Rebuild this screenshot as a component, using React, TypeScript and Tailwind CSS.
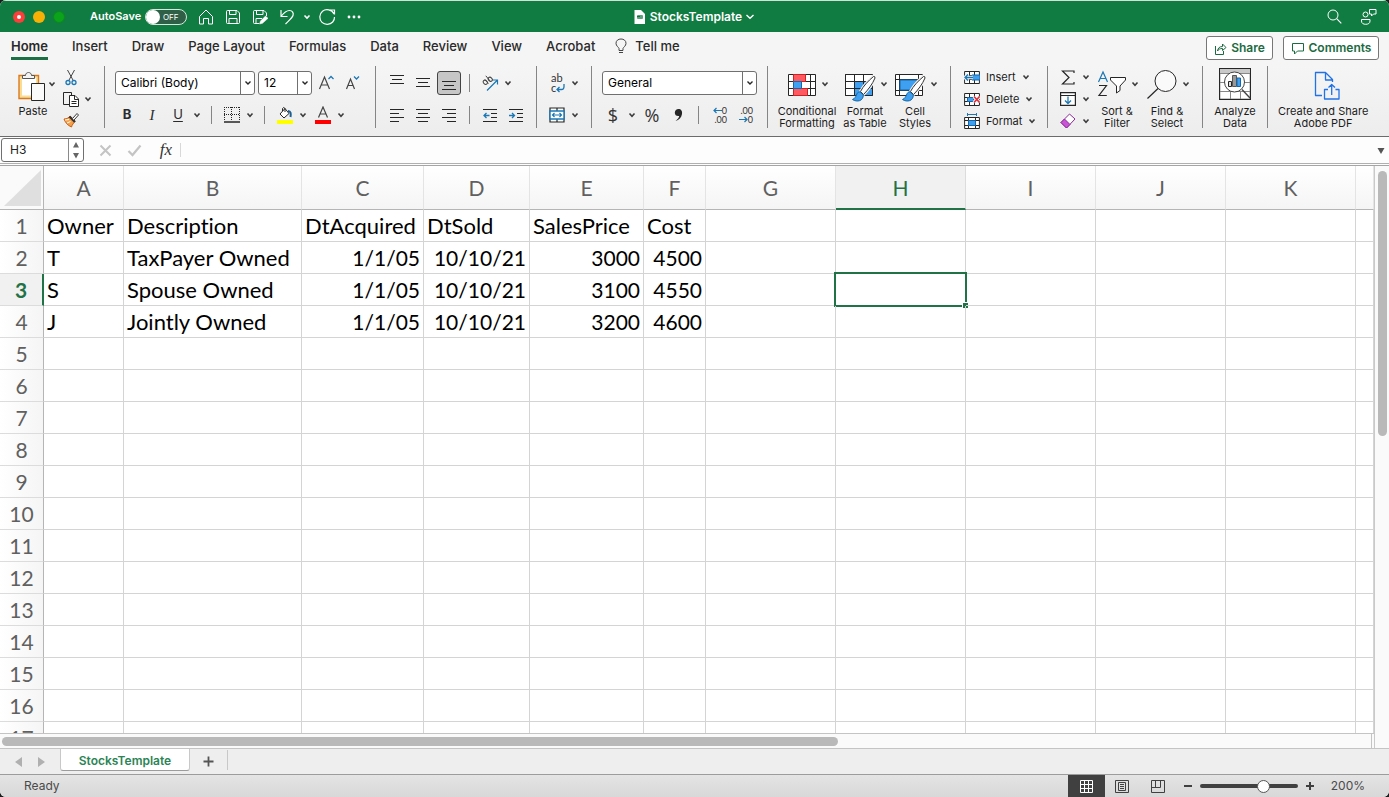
import React from "react";

type Kids = { children?: React.ReactNode };

function Icon({ w, h, children, className = "" }: Kids & { w: number; h: number; className?: string }) {
  return (
    <svg width={w} height={h} viewBox={`0 0 ${w} ${h}`} fill="none" stroke="#262626" aria-hidden="true" className={`shrink-0 ${className}`}>
      {children}
    </svg>
  );
}

function Chevron({ label, className = "" }: { label: string; className?: string }) {
  return (
    <button aria-label={label} className={`flex h-6 w-3 shrink-0 items-center justify-center ${className}`}>
      <Icon w={8} h={6}>
        <path d="M1.5 1.5 L4 4.2 L6.5 1.5" strokeWidth="1.6" stroke="#3c3c3c" />
      </Icon>
    </button>
  );
}

function Tool({ label, className = "w-4", children }: Kids & { label: string; className?: string }) {
  return (
    <button aria-label={label} className={`flex h-6 shrink-0 items-center justify-center ${className}`}>
      {children}
    </button>
  );
}

function Divider() {
  return <div className="h-[62px] w-px shrink-0 bg-[#858585]" />;
}

function MiniDivider({ className = "" }: { className?: string }) {
  return <div className={`h-[18px] w-px shrink-0 bg-[#858585] ${className}`} />;
}

function Picker({ label, value, className }: { label: string; value: string; className: string }) {
  return (
    <div className={`relative h-6 shrink-0 ${className}`}>
      <select aria-label={label} className="block h-6 w-full appearance-none rounded-[3px] border border-[#707070] bg-white pl-[5px] text-[12px] text-black outline-none">
        <option>{value}</option>
      </select>
      <span className="pointer-events-none absolute inset-y-0 right-0 flex w-[15px] items-center justify-center border-l border-[#707070]">
        <Icon w={8} h={6}>
          <path d="M1.5 1.5 L4 4 L6.5 1.5" strokeWidth="1.4" />
        </Icon>
      </span>
    </div>
  );
}

function Lines({ spans }: { spans: [number, number][] }) {
  return (
    <Icon w={14} h={14}>
      {spans.map(([a, b], i) => (
        <path key={i} d={`M${a} ${i * 4 + 1.5} H${b}`} />
      ))}
    </Icon>
  );
}

function BigButton({ lines, icon, menu, className = "" }: { lines: [string, string]; icon: React.ReactNode; menu?: boolean; className?: string }) {
  return (
    <button className={`flex shrink-0 flex-col items-center ${className}`}>
      <span className="flex h-9 items-center">
        {menu && <span className="w-0.5" />}
        {icon}
        {menu && (
          <span className="flex w-3 justify-end">
            <Icon w={8} h={6}>
              <path d="M1.5 1.5 L4 4.2 L6.5 1.5" strokeWidth="1.6" stroke="#3c3c3c" />
            </Icon>
          </span>
        )}
      </span>
      <span className="mt-[3px] text-[11px] leading-[12px] whitespace-nowrap text-[#1c1c1c]">
        {lines[0]}
        <br />
        {lines[1]}
      </span>
    </button>
  );
}

function Brush() {
  return (
    <>
      <path d="M29 2.500 C24 7 19 12.500 16.500 17.500 L19.500 20.500 C24 16 28.500 10 31 4 Z" fill="#f4f4f4" stroke="#f2f2f2" strokeWidth="3" />
      <path d="M29.500 2.500 C24 7 19 12.500 16.500 17.500 L19.500 20.500 C24 16 28.500 10 31 4 Q31 2 29.500 2.500 Z" fill="#fff" stroke="#333" />
      <path d="M16 17.800 C12 17.500 13 24 8.500 25.500 C13 28.500 19.500 27 19.300 21 Z" fill="#3f9ff0" stroke="#1567a8" />
    </>
  );
}

function TitleBar() {
  return (
    <header className="flex h-8 shrink-0 items-center border-t border-[#cfe3d6] bg-[#107c41] text-white">
      <div className="flex flex-1 items-center">
        <div className="ml-[13px] flex gap-2">
          <button aria-label="Close window" className="flex size-3 items-center justify-center rounded-full bg-[#fc3d39]">
            <span className="size-1 rounded-full bg-white" />
          </button>
          <button aria-label="Minimize window" className="size-3 rounded-full bg-[#f8b006]" />
          <button aria-label="Zoom window" className="size-3 rounded-full border border-[#0b8a1c] bg-[#0aa31a]" />
        </div>
        <span className="ml-[25px] w-[51px] text-[11px] font-semibold whitespace-nowrap">AutoSave</span>
        <button role="switch" aria-checked="false" aria-label="AutoSave" className="ml-1 flex h-4 w-[42px] items-center rounded-full border border-[#d7e8de] bg-[#2f5f46] text-[8px]">
          <span className="size-3.5 rounded-full bg-white" />
          <span className="ml-[3px]">OFF</span>
        </button>
        <div className="ml-[11px] flex items-center gap-[11px]">
          <button aria-label="Home">
            <Icon w={16} h={16}>
              <path stroke="#fff" d="M1.5 7.500 L8 1 L14.500 7.500 V15 H10.500 V9.500 H5.500 V15 H1.500 Z" strokeLinejoin="round" />
            </Icon>
          </button>
          <button aria-label="Save">
            <Icon w={16} h={16}>
              <path stroke="#fff" d="M1.500 2.500 Q1.500 1.500 2.500 1.500 H12 L14.500 4 V13.500 Q14.500 14.500 13.500 14.500 H2.500 Q1.500 14.500 1.500 13.500 Z M4.500 1.500 V5.500 H11 V1.500 M4 14.500 V9.500 H12 V14.500" />
            </Icon>
          </button>
          <button aria-label="Save as">
            <Icon w={16} h={16}>
              <path stroke="#fff" d="M7 14.500 H2.500 Q1.500 14.500 1.500 13.500 V2.500 Q1.500 1.500 2.500 1.500 H12 L14.500 4 V7 M4.500 1.500 V5.500 H11 V1.500 M4 14.500 V9.500 H10" />
              <path d="M7.500 15 L8.500 12 L13.500 7 L16 9.300 L10.500 14.300 Z" fill="#fff" stroke="#fff" strokeWidth=".5" />
            </Icon>
          </button>
          <button aria-label="Undo">
            <Icon w={16} h={16}>
              <path stroke="#fff" strokeWidth="1.2" d="M2 1 V7.500 H8.500 M2 7.500 C5 3.500 8 1.500 10.500 1.500 C13.500 1.500 14.800 4 14 6.500 C13.500 8.500 11 10.500 6.500 15" />
            </Icon>
          </button>
        </div>
        <button aria-label="Undo history" className="ml-2">
          <Icon w={8} h={6}>
            <path d="M1.500 1.500 L4 4 L6.500 1.500" stroke="#fff" strokeWidth="1.600" />
          </Icon>
        </button>
        <button aria-label="Repeat" className="ml-[7px]">
          <Icon w={18} h={18}>
            <path stroke="#fff" strokeWidth="1.200" d="M12 2 H16.500 V6.500 M16 6 C14 1.500 8 .5 4.500 3.200 C1 6 1 11.500 4 14.400 C7 17.200 12 17 14.700 14 C16.200 12.300 16.600 10.500 16.500 9" />
          </Icon>
        </button>
        <button aria-label="More commands" className="ml-2.5">
          <Icon w={16} h={4}>
            <circle cx="3" cy="2" r="1.400" fill="#fff" stroke="none" />
            <circle cx="8" cy="2" r="1.400" fill="#fff" stroke="none" />
            <circle cx="13" cy="2" r="1.400" fill="#fff" stroke="none" />
          </Icon>
        </button>
      </div>
      <button className="flex items-center text-[12px] font-semibold">
        <Icon w={11} h={14} className="mr-[5px]">
          <path d="M.5 0 H7 L11 4 V14 H.5 Z" fill="#fff" stroke="none" />
          <rect x="3" y="5" width="6" height="4" rx="1" fill="#5aa27c" stroke="none" />
          <path d="M3 6.500 H6" stroke="#1d6b41" />
        </Icon>
        StocksTemplate
        <Icon w={10} h={6} className="ml-[3px]">
          <path d="M1.500 1 L5 4.300 L8.500 1" stroke="#fff" strokeWidth="1.400" />
        </Icon>
      </button>
      <div className="flex flex-1 items-center justify-end gap-[18px]">
        <button aria-label="Search">
          <Icon w={15} h={15}>
            <circle cx="6" cy="6" r="5" stroke="#fff" />
            <path d="M9.700 9.700 L14.300 14.300" stroke="#fff" strokeWidth="1.200" />
          </Icon>
        </button>
        <button aria-label="Presence" className="mr-3">
          <Icon w={17} h={17}>
            <g stroke="#fff">
              <circle cx="5.500" cy="6.500" r="2.500" />
              <path d="M1.500 11.500 H10 V13 C10 15.500 8 16.300 5.700 16.300 C3.500 16.300 1.500 15.500 1.500 13 Z" strokeLinejoin="round" />
              <path d="M9.500 1.500 H16 V6 H13.500 L11.500 8 V6 H9.500 Z" strokeLinejoin="round" />
            </g>
          </Icon>
        </button>
      </div>
    </header>
  );
}

const tabs = ["Home", "Insert", "Draw", "Page Layout", "Formulas", "Data", "Review", "View", "Acrobat"];

function TabRow() {
  return (
    <nav className="flex h-[34px] shrink-0 items-start bg-[#f5f5f5] pr-[10px] pl-[11px] text-[13px] font-medium text-[#2a2a2a]">
      <div className="flex gap-6">
        {tabs.map((t, i) => (
          <a key={t} href="#" className={i === 0 ? "border-b-[3px] border-[#1c6f44] pt-1 pb-px leading-5 font-semibold" : "pt-1 leading-5"}>
            {t}
          </a>
        ))}
      </div>
      <button className="ml-5 flex items-center gap-2 pt-1 leading-5">
        <Icon w={12} h={16}>
          <path d="M4 12 V10.500 C3.500 9 1 8 1 5.300 C1 2.500 3.300 1 6 1 C8.700 1 11 2.500 11 5.300 C11 8 8.500 9 8 10.500 V12 M3.800 12.500 H8.200 M4 14.500 H8" stroke="#444" />
        </Icon>
        Tell me
      </button>
      <div className="ml-auto flex gap-2.5 pt-1 text-[12px] font-semibold text-[#1b6b41]">
        <button className="flex h-6 w-[67px] items-center justify-center gap-1 rounded-[3px] border border-[#777] bg-white">
          <Icon w={13} h={13}>
            <path stroke="#1b6b41" d="M1.500 4 V12.500 H9.500 V9 M3.500 9 C4 6 5.500 4.500 8.500 4.500 V2 L12 5.500 L8.500 8.500 V6.500 C6 6.500 4.500 7.200 3.500 9 Z" strokeLinejoin="round" />
          </Icon>
          Share
        </button>
        <button className="flex h-6 w-24 items-center justify-center gap-1 rounded-[3px] border border-[#777] bg-white">
          <Icon w={14} h={13}>
            <path stroke="#1b6b41" d="M1.500 1.500 H12.500 V9 H6.500 L3.500 12 V9 H1.500 Z" strokeLinejoin="round" />
          </Icon>
          Comments
        </button>
      </div>
    </nav>
  );
}

function ClipboardGroup() {
  return (
    <div className="flex w-[104px] shrink-0">
      <button className="ml-3.5 flex w-[38px] shrink-0 flex-col items-center">
        <Icon w={29} h={32} className="mt-1 mr-1">
          <path d="M2 5.500 H21.500 V28.500 H2 Z" fill="#fbdc93" stroke="#d9791f" strokeWidth="1.400" />
          <path d="M5 8 H19 V25.500 H5 Z" fill="#fff" stroke="none" />
          <path d="M5.500 8.500 V5.500 H8.500 C8.500 1.500 14.500 1.500 14.500 5.500 H17.500 V8.500 Z" fill="#f4f4f4" stroke="#555" />
          <path d="M14.500 13.500 H27.500 V30.500 H14.500 Z" fill="#fafafa" />
        </Icon>
        <span className="mt-0.5 text-[11px] leading-[14px] text-[#1c1c1c]">Paste</span>
      </button>
      <Chevron label="Paste options" className="mt-1.5 -ml-1.5" />
      <div className="ml-[5px] flex flex-col gap-1 pt-1">
        <Tool label="Cut" className="h-4! w-4">
          <Icon w={16} h={16}>
            <path d="M4.500 0 L10.500 11 M11.500 0 L5.500 11" stroke="#444" />
            <circle cx="5" cy="12.500" r="2" stroke="#1b78b5" strokeWidth="1.300" />
            <circle cx="11" cy="12.500" r="2" stroke="#1b78b5" strokeWidth="1.300" />
          </Icon>
        </Tool>
        <div className="flex h-[18px] items-center">
          <Tool label="Copy">
            <Icon w={17} h={17}>
              <path d="M7 13.500 H.5 V1.500 H8.500 V4" />
              <path d="M6.500 4.500 H12 L15.500 8 V15.500 H6.500 Z" fill="#fff" />
              <path d="M11.500 4.500 V8.500 H15.500 M8.500 10.500 H13.500 M8.500 12.500 H13.500" />
            </Icon>
          </Tool>
          <Chevron label="Copy options" className="ml-[3px]" />
        </div>
        <Tool label="Format painter" className="h-4! w-4">
          <Icon w={17} h={16}>
            <path d="M1 7 C4 7 6 5.500 7 4 L12 9.500 C10.500 11 9 13 8.500 15 C5 13.500 2.500 11 1 7 Z" fill="#f5a04a" stroke="#c95f10" />
            <path d="M6.500 4.500 L12 10" stroke="#333" strokeWidth="2.200" />
            <path d="M9.500 6.500 L14 1.500 L15.500 3 L11 8" fill="#fff" stroke="#333" />
            <path d="M2 8 L6 7.500 M4 11 L7.500 9.500" stroke="#fff" />
          </Icon>
        </Tool>
      </div>
    </div>
  );
}

function FontGroup() {
  return (
    <div className="w-[270px] shrink-0 pt-px pl-2.5">
      <div className="flex h-8 items-center">
        <Picker label="Font" value="Calibri (Body)" className="w-[140px]" />
        <Picker label="Font size" value="12" className="ml-[3px] w-[54px]" />
        <Tool label="Increase font size" className="ml-1.5 w-[18px]">
          <Icon w={18} h={18}>
            <path d="M1.500 15 L6.500 3 L11.500 15 M3.300 11 H9.700" stroke="#444" strokeWidth="1.200" />
            <path d="M10.500 5 L13 2.500 L15.500 5" stroke="#1b78b5" strokeWidth="1.300" />
          </Icon>
        </Tool>
        <Tool label="Decrease font size" className="ml-2 w-[18px]">
          <Icon w={18} h={18}>
            <path d="M2.500 15 L6.500 5 L10.500 15 M4 11.500 H9" stroke="#444" strokeWidth="1.200" />
            <path d="M10 2.500 L12.500 5 L15 2.500" stroke="#1b78b5" strokeWidth="1.300" />
          </Icon>
        </Tool>
      </div>
      <div className="flex h-8 items-center text-[13px] text-[#2b2b2b]">
        <button className="w-6 font-bold" aria-label="Bold">B</button>
        <button className="w-[26px] font-['Liberation_Serif',serif] text-[15px] leading-5 italic" aria-label="Italic">I</button>
        <button className="w-[26px] underline underline-offset-2" aria-label="Underline">U</button>
        <Chevron label="Underline style" />
        <MiniDivider className="ml-2" />
        <Tool label="Borders" className="ml-3 w-4">
          <Icon w={16} h={16}>
            <path d="M0 .5 H16 M.5 0 V14 M15.500 0 V14 M7.500 0 V14 M0 7.500 H16" strokeDasharray="1 1" />
            <path d="M0 15 H16" strokeWidth="1.500" />
          </Icon>
        </Tool>
        <Chevron label="Border options" className="ml-1" />
        <MiniDivider className="ml-2" />
        <Tool label="Fill color" className="ml-3 w-4">
          <Icon w={16} h={18}>
            <path d="M3 8 L8 2.500 L12 7.500 L7 12 Z" fill="#fff" />
            <path d="M5.500 5 V2.500 Q6.500 .5 8 2.500 V6" />
            <path d="M11 5 C14 5 14 8 13.500 11" stroke="#1b5f93" strokeWidth="2" />
            <path d="M0 16 H16" stroke="#ffff00" strokeWidth="4" />
          </Icon>
        </Tool>
        <Chevron label="Fill color options" className="ml-1" />
        <Tool label="Font color" className="ml-1.5 w-4">
          <Icon w={16} h={18}>
            <path d="M3.500 11.500 L8 1 L12.500 11.500 M5 8 H11" stroke="#444" strokeWidth="1.200" />
            <path d="M0 16 H16" stroke="#ff0000" strokeWidth="4" />
          </Icon>
        </Tool>
        <Chevron label="Font color options" className="ml-1" />
      </div>
    </div>
  );
}

function AlignGroup() {
  return (
    <div className="w-[160px] shrink-0 pt-px pl-[9px]">
      <div className="flex h-8 items-center">
        <Tool label="Top align" className="w-6 pb-1"><Lines spans={[[0, 14], [2, 12], [0, 14]]} /></Tool>
        <Tool label="Middle align" className="ml-0.5 w-6 pt-0.5"><Lines spans={[[0, 14], [2, 12], [0, 14]]} /></Tool>
        <Tool label="Bottom align" className="ml-0.5 w-6 rounded-[3px] border border-[#444] bg-[#c6c6c6] pt-2"><Lines spans={[[0, 14], [2, 12], [0, 14]]} /></Tool>
        <MiniDivider className="ml-2" />
        <Tool label="Orientation" className="ml-3 w-4">
          <Icon w={17} h={17}>
            <g stroke="#444">
              <ellipse cx="3.300" cy="7.300" rx="1.800" ry="2.300" transform="rotate(-45 3.300 7.300)" />
              <path d="M3 4.500 L6.500 8.500" />
              <ellipse cx="8.300" cy="4.300" rx="1.800" ry="2.300" transform="rotate(-45 8.300 4.300)" />
              <path d="M3.800 .8 L8.500 6.500" />
            </g>
            <path d="M5 15.500 L15.500 5 M11 5 H15.500 V9.500" stroke="#1b78b5" strokeWidth="1.200" />
          </Icon>
        </Tool>
        <Chevron label="Orientation options" className="ml-1" />
      </div>
      <div className="flex h-8 items-center">
        <Tool label="Align left" className="w-6"><Lines spans={[[0, 14], [0, 9], [0, 14], [0, 9]]} /></Tool>
        <Tool label="Center" className="ml-0.5 w-6"><Lines spans={[[0, 14], [2, 12], [0, 14], [2, 12]]} /></Tool>
        <Tool label="Align right" className="ml-0.5 w-6"><Lines spans={[[0, 14], [5, 14], [0, 14], [5, 14]]} /></Tool>
        <MiniDivider className="ml-2" />
        <Tool label="Decrease indent" className="ml-3 w-4">
          <Icon w={14} h={14}>
            <path d="M0 1.500 H14 M8 5.500 H14 M8 9.500 H14 M0 13.500 H14" />
            <path d="M6.500 7.500 H1 M3.500 5 L1 7.500 L3.500 10" stroke="#1b78b5" strokeWidth="1.300" />
          </Icon>
        </Tool>
        <Tool label="Increase indent" className="ml-2.5 w-4">
          <Icon w={14} h={14}>
            <path d="M0 1.500 H14 M8 5.500 H14 M8 9.500 H14 M0 13.500 H14" />
            <path d="M0 7.500 H5.500 M3 5 L5.500 7.500 L3 10" stroke="#1b78b5" strokeWidth="1.300" />
          </Icon>
        </Tool>
      </div>
    </div>
  );
}

function WrapGroup() {
  return (
    <div className="w-[54px] shrink-0 pt-px pl-3">
      <div className="flex h-8 items-center">
        <Tool label="Wrap text">
          <span className="flex w-4 flex-col pl-0.5 text-left font-['Lato',sans-serif] text-[11px] leading-[10px] text-[#333]">
            <span className="h-2.5">ab</span>
            <span className="flex h-2.5 items-center">
              c
              <Icon w={9} h={9}>
                <path d="M8 0 V2.500 Q8 5.500 5.500 5.500 H1 M3.500 3 L1 5.500 L3.500 8" stroke="#1b78b5" strokeWidth="1.300" />
              </Icon>
            </span>
          </span>
        </Tool>
        <Chevron label="Wrap options" className="ml-1" />
      </div>
      <div className="flex h-8 items-center">
        <Tool label="Merge cells">
          <Icon w={16} h={16}>
            <path d="M1 1 H15 V15 H1 Z M8 1 V4 M8 12 V15" fill="#fff" strokeWidth="1.200" />
            <path d="M1 4 H15 V12 H1 Z" stroke="#1b78b5" strokeWidth="1.400" fill="#fff" />
            <path d="M3.500 8 H12.500 M5.500 6 L3.500 8 L5.500 10 M10.500 6 L12.500 8 L10.500 10" stroke="#1b78b5" strokeWidth="1.200" />
          </Icon>
        </Tool>
        <Chevron label="Merge options" className="ml-1" />
      </div>
    </div>
  );
}

function NumberGroup() {
  return (
    <div className="w-[175px] shrink-0 pt-px pl-2.5">
      <div className="flex h-8 items-center">
        <Picker label="Number format" value="General" className="w-[155px]" />
      </div>
      <div className="flex h-8 items-center text-[#333]">
        <button aria-label="Currency" className="w-[22px] font-['Open_Sans',sans-serif] text-[18px] leading-6">$</button>
        <Chevron label="Currency options" className="ml-0.5" />
        <button aria-label="Percent" className="ml-1 w-5 font-['Open_Sans',sans-serif] text-[18px] leading-6">%</button>
        <Tool label="Comma style" className="ml-1.5 w-5">
          <Icon w={9} h={14}>
            <path d="M4.500 1 C7 1 8.500 3 8 6 C7.500 9.500 5 12 1.500 13 C4 11 5.200 9.300 5.200 8 C2.500 8.500 .8 6.800 .8 4.700 C.8 2.500 2.500 1 4.500 1 Z" fill="#262626" stroke="none" />
          </Icon>
        </Tool>
        <MiniDivider className="ml-2.5" />
        <Tool label="Increase decimal" className="ml-3 w-4">
          <span className="flex w-4 flex-col items-end font-['Lato',sans-serif] text-[9px] leading-[9px]">
            <span className="flex h-[9px] items-center">
              <Icon w={9} h={7}>
                <path d="M9 3.500 H1 M3.500 1 L1 3.500 L3.500 6" stroke="#1b78b5" strokeWidth="1.200" />
              </Icon>
              0
            </span>
            <span className="h-[9px]">.00</span>
          </span>
        </Tool>
        <Tool label="Decrease decimal" className="ml-2.5 w-4">
          <span className="flex w-4 flex-col items-end font-['Lato',sans-serif] text-[9px] leading-[9px]">
            <span className="h-[9px]">.00</span>
            <span className="flex h-[9px] items-center">
              <Icon w={9} h={7}>
                <path d="M0 3.500 H8 M5.500 1 L8 3.500 L5.500 6" stroke="#1b78b5" strokeWidth="1.200" />
              </Icon>
              0
            </span>
          </span>
        </Tool>
      </div>
    </div>
  );
}

function StylesGroup() {
  return (
    <div className="flex w-[182px] shrink-0 pl-2.5">
      <BigButton
        menu
        className="w-[58px]"
        lines={["Conditional", "Formatting"]}
        icon={
          <Icon w={30} h={36}>
            <path d="M1.500 8.500 H28.500 V29.500 H1.500 Z" fill="#fff" />
            <path d="M1.500 15.500 H28.500 M1.500 22.500 H28.500 M23.500 8.500 V29.500 M6.500 8.500 V29.500" />
            <path d="M6.500 8.500 H18.500 V15.500 H6.500 Z M6.500 22.500 H20.500 V29.500 H6.500 Z" fill="#ff5a61" stroke="#c22" />
            <path d="M6.500 15.500 H14.500 V22.500 H6.500 Z" fill="#3f9ff0" stroke="#1567a8" />
          </Icon>
        }
      />
      <BigButton
        menu
        className="w-[58px]"
        lines={["Format", "as Table"]}
        icon={
          <Icon w={32} h={36}>
            <path d="M1.500 8.500 H28.500 V29.500 H1.500 Z" fill="#fff" />
            <path d="M10.500 15.500 H28.500 V29.500 H10.500 Z" fill="#3f9ff0" stroke="none" />
            <path d="M1.500 8.500 H28.500 V29.500 H1.500 Z M1.500 15.500 H28.500 M1.500 22.500 H28.500 M10.500 8.500 V29.500 M19.500 8.500 V29.500" />
            <g transform="translate(0 8)"><Brush /></g>
          </Icon>
        }
      />
      <BigButton
        menu
        className="w-[42px]"
        lines={["Cell", "Styles"]}
        icon={
          <Icon w={32} h={36}>
            <path d="M1.500 8.500 H28.500 V29.500 H1.500 Z" fill="#fff" />
            <path d="M5.500 8.500 V29.500 M24.500 8.500 V29.500 M1.500 13.500 H28.500 M1.500 24.500 H28.500" />
            <path d="M6 14 H24 V24 H6 Z" fill="#3f9ff0" stroke="#1567a8" />
            <g transform="translate(0 8)"><Brush /></g>
          </Icon>
        }
      />
    </div>
  );
}

function CellsGroup() {
  const grid = <path d="M.6 2.500 H15.400 V14.500 H.6 Z M.6 6.500 H15.400 M.6 10.500 H15.400 M5.500 2.500 V14.500 M10.500 2.500 V14.500" fill="#fff" />;
  const items = [
    {
      name: "Insert",
      art: (
        <>
          {grid}
          <path d="M8 6 H16 V11 H8 Z" fill="#3f9ff0" stroke="#1567a8" />
          <path d="M9 8.500 H1 M4 5.500 L1 8.500 L4 11.500" stroke="#f3f3f3" strokeWidth="3.500" />
          <path d="M9 8.500 H1 M4 5.500 L1 8.500 L4 11.500" stroke="#1b78b5" strokeWidth="1.300" />
        </>
      ),
    },
    {
      name: "Delete",
      art: (
        <>
          {grid}
          <path d="M3.500 6.500 H9.500 V10.500 H3.500 Z" fill="#3f9ff0" stroke="#1567a8" />
          <path d="M10 5.500 L15.500 11.500 M15.500 5.500 L10 11.500" stroke="#fff" strokeWidth="3.500" />
          <path d="M10 5.500 L15.500 11.500 M15.500 5.500 L10 11.500" stroke="#e0303a" strokeWidth="1.600" />
        </>
      ),
    },
    {
      name: "Format",
      art: (
        <>
          <path d="M.6 4.500 H15.400 V15.500 H.6 Z M.6 7.500 H15.400 M.6 12.500 H15.400 M4.500 4.500 V15.500 M11.500 4.500 V15.500" fill="#fff" />
          <path d="M4.500 7.500 H11.500 V12.500 H4.500 Z" fill="#3f9ff0" stroke="#1567a8" />
          <path d="M3.500 1.500 H12.500 M3.500 0 V3 M12.500 0 V3" stroke="#1b78b5" />
        </>
      ),
    },
  ];
  return (
    <div className="w-24 shrink-0 pl-[13px]">
      {items.map((it) => (
        <button key={it.name} className="flex h-[22px] items-center text-[11px] text-[#1c1c1c]">
          <Icon w={16} h={16} className="mr-1.5">{it.art}</Icon>
          {it.name}
          <Icon w={8} h={6} className="ml-1.5">
            <path d="M1.500 1.500 L4 4.200 L6.500 1.500" strokeWidth="1.600" stroke="#3c3c3c" />
          </Icon>
        </button>
      ))}
    </div>
  );
}

function EditingGroup() {
  return (
    <div className="flex w-[154px] shrink-0 pl-3">
      <div>
        <div className="flex h-[22px] items-center">
          <Tool label="AutoSum"><Icon w={14} h={15}><path d="M13 3 V1 H1.500 L8 7.500 L1.500 14 H13 V12" strokeWidth="1.200" /></Icon></Tool>
          <Chevron label="AutoSum options" className="ml-1" />
        </div>
        <div className="flex h-[22px] items-center">
          <Tool label="Fill">
            <Icon w={16} h={14}>
              <path d="M.6 .6 H15.400 V13.400 H.6 Z M.6 3.500 H15.400" fill="#fff" strokeWidth="1.200" />
              <path d="M8 4.500 V11.500 M5 8.500 L8 11.500 L11 8.500" stroke="#1b78b5" strokeWidth="1.300" />
            </Icon>
          </Tool>
          <Chevron label="Fill options" className="ml-1" />
        </div>
        <div className="flex h-[22px] items-center">
          <Tool label="Clear">
            <Icon w={16} h={16}>
              <path d="M1 9.500 L9.500 1 L15 6 L6.500 15 Z" fill="#fff" stroke="#8a2a96" strokeLinejoin="round" />
              <path d="M1 9.500 L4.500 6 L10 11.500 L6.500 15 Z" fill="#c955d6" stroke="#8a2a96" strokeLinejoin="round" />
            </Icon>
          </Tool>
          <Chevron label="Clear options" className="ml-1" />
        </div>
      </div>
      <BigButton
        menu
        className="w-[50px]"
        lines={["Sort &", "Filter"]}
        icon={
          <Icon w={30} h={32}>
            <path d="M1.500 14 L6 4 L10.500 14 M3 10.500 H9" stroke="#1b78b5" strokeWidth="1.200" />
            <path d="M2 17.500 H9.500 L2 27.500 H9.800" strokeWidth="1.200" />
            <path d="M13.500 9.500 H28.500 V12 L23 18 V22.500 L19.500 25 V18 L13.500 12 Z" fill="#fff" />
          </Icon>
        }
      />
      <BigButton
        menu
        className="w-[50px]"
        lines={["Find &", "Select"]}
        icon={
          <Icon w={32} h={32}>
            <circle cx="19.500" cy="13" r="10.500" fill="#fafafa" />
            <path d="M12 20.500 L1.500 30.500" strokeWidth="1.200" />
          </Icon>
        }
      />
    </div>
  );
}

function Ribbon() {
  return (
    <div className="flex h-[71px] shrink-0 items-start overflow-hidden border-b border-[#6b6b6b] bg-linear-to-b from-[#f5f5f5] to-[#ededed]">
      <ClipboardGroup />
      <Divider />
      <FontGroup />
      <Divider />
      <AlignGroup />
      <Divider />
      <WrapGroup />
      <Divider />
      <NumberGroup />
      <Divider />
      <StylesGroup />
      <Divider />
      <CellsGroup />
      <Divider />
      <EditingGroup />
      <Divider />
      <div className="flex w-16 shrink-0 justify-center">
        <BigButton
          lines={["Analyze", "Data"]}
          icon={
            <Icon w={32} h={34}>
              <path d="M.6 1.600 H31.400 V32.400 H.6 Z" fill="#fff" strokeWidth="1.200" />
              <path d="M1 2 H31 V6 H1 Z" fill="#c8c8c8" stroke="none" />
              <path d="M1 6.500 H31 M1 15.500 H31 M1 24.500 H31 M11.500 24 V32 M21.500 24 V32" stroke="#888" />
              <circle cx="15.500" cy="15" r="10" fill="#fff" stroke="#444" />
              <path d="M9.500 14.500 H12.500 V19.500 H9.500 Z" fill="#ddd" />
              <path d="M13.500 8.500 H17.500 V19.500 H13.500 Z" fill="#999" stroke="#555" />
              <path d="M18 11 H21.500 V19.500 H18 Z" fill="#3f9ff0" stroke="#1567a8" />
              <path d="M23 22.500 L31 31" stroke="#444" strokeWidth="1.400" />
            </Icon>
          }
        />
      </div>
      <Divider />
      <div className="flex shrink-0 pl-2.5">
        <BigButton
          lines={["Create and Share", "Adobe PDF"]}
          icon={
            <Icon w={26} h={30} className="mt-1 ml-2">
              <g stroke="#1f72e8" strokeWidth="1.300" strokeLinejoin="round">
                <path d="M8 24.500 H1.500 V1.500 H11.500 L18.500 8.500 V11 M11.500 1.500 V9 H18.500" />
                <path d="M14 18.500 H10.500 V28 H25 V18.500 H21.500 M17.700 24 V13.500 M14.500 16.500 L17.700 13.500 L21 16.500" />
              </g>
            </Icon>
          }
        />
      </div>
    </div>
  );
}

function FormulaBar() {
  return (
    <div className="flex h-[29px] shrink-0 items-start border-b border-[#a5a5a5] bg-[#fdfdfd]">
      <div className="flex h-[27px] w-full items-start border-b border-[#b0b0b0]">
        <div className="mt-px ml-px flex h-6 w-[83px] rounded-[3px] border border-[#707070] bg-white">
          <input aria-label="Name box" defaultValue="H3" className="w-[67px] border-r border-[#8a8a8a] bg-transparent pl-2 text-[12px] text-[#222] outline-none" />
          <Icon w={14} h={22}>
            <path d="M7 3 L10 8.500 H4 Z M7 19.500 L10 14 H4 Z" fill="#666" stroke="none" />
          </Icon>
        </div>
        <div className="ml-[13px] flex h-[26px] items-center">
          <Tool label="Cancel"><Icon w={13} h={13}><path d="M1.500 1.500 L11.500 11.500 M11.500 1.500 L1.500 11.500" stroke="#c4c4c4" strokeWidth="2" /></Icon></Tool>
          <Tool label="Enter" className="ml-[13px] w-4"><Icon w={15} h={13}><path d="M1.500 7 L5.500 11 L13.500 1.500" stroke="#c4c4c4" strokeWidth="2.200" /></Icon></Tool>
          <button aria-label="Insert function" className="ml-4 w-4 font-['Liberation_Serif',serif] text-[17px] text-[#333] italic">fx</button>
        </div>
        <div className="mt-1.5 ml-1.5 h-3.5 w-px bg-[#d8d8d8]" />
        <input aria-label="Formula" className="h-6 min-w-0 flex-1 bg-transparent px-2 outline-none" />
        <button aria-label="Expand formula bar" className="mt-2.5 mr-1">
          <Icon w={8} h={8}><path d="M.5 1 H7.500 L4 7 Z" fill="#555" stroke="none" /></Icon>
        </button>
      </div>
    </div>
  );
}

const columns = ["A", "B", "C", "D", "E", "F", "G", "H", "I", "J", "K", ""];
const rows: string[][] = [
  ["Owner", "Description", "DtAcquired", "DtSold", "SalesPrice", "Cost"],
  ["T", "TaxPayer Owned", "1/1/05", "10/10/21", "3000", "4500"],
  ["S", "Spouse Owned", "1/1/05", "10/10/21", "3100", "4550"],
  ["J", "Jointly Owned", "1/1/05", "10/10/21", "3200", "4600"],
];

function Sheet() {
  return (
    <div className="flex min-h-0 flex-1 bg-white">
      <div className="flex min-w-0 flex-1 flex-col">
        <div className="min-h-0 flex-1 overflow-hidden border-b border-[#c4c4c4]">
          <table className="w-full table-fixed border-separate border-spacing-0 font-['Lato',sans-serif] text-[22px] leading-[30px] text-black [font-variant-ligatures:none]">
            <colgroup>
              <col className="w-11" />
              <col className="w-20" />
              <col className="w-[178px]" />
              <col className="w-[122px]" />
              <col className="w-[106px]" />
              <col className="w-[114px]" />
              <col className="w-[62px]" />
              <col className="w-[130px]" />
              <col className="w-[130px]" />
              <col className="w-[130px]" />
              <col className="w-[130px]" />
              <col className="w-[130px]" />
              <col />
            </colgroup>
            <thead>
              <tr className="h-11">
                <th aria-label="Select all" className="border-r border-b border-[#b5b5b5] bg-[#fafafa] p-0">
                  <Icon w={38} h={38} className="ml-1">
                    <path d="M37 1 V37 H0 Z" fill="#dfdfdf" stroke="none" />
                  </Icon>
                </th>
                {columns.map((c, i) => (
                  <th
                    key={i}
                    scope="col"
                    className={
                      c === "H"
                        ? "border-r border-b-2 border-r-[#dcdcdc] border-b-[#1f7346] bg-[#f1f1f1] p-0 pt-px text-[21px] font-normal text-[#1f7346]"
                        : "border-r border-b border-r-[#e4e4e4] border-b-[#b5b5b5] bg-linear-to-b from-white to-[#f5f5f5] p-0 text-[21px] font-normal text-[#606060]"
                    }
                  >
                    {c}
                  </th>
                ))}
              </tr>
            </thead>
            <tbody>
              {Array.from({ length: 17 }, (_, r) => (
                <tr key={r} className="h-8">
                  <th
                    scope="row"
                    className={
                      r === 2
                        ? "border-r-2 border-b border-r-[#1f7346] border-b-[#dcdcdc] bg-[#f1f1f1] p-0 text-[21px] font-bold text-[#1f7346]"
                        : "border-r border-b border-r-[#b5b5b5] border-b-[#dcdcdc] bg-linear-to-r from-white to-[#f5f5f5] p-0 text-[21px] font-normal text-[#606060]"
                    }
                  >
                    {r + 1}
                  </th>
                  {columns.map((c, i) => (
                    <td
                      key={i}
                      className={
                        "relative border-r border-b border-[#d4d4d4] px-[3px] py-0 whitespace-nowrap " +
                        (r > 0 && i > 1 ? "text-right text-[21px]" : "text-left")
                      }
                    >
                      {rows[r]?.[i]}
                      {r === 2 && c === "H" && (
                        <span className="absolute -top-0.5 -right-0.5 -bottom-0.5 -left-0.5 border-2 border-[#1f7346]">
                          <span className="absolute -right-[3px] -bottom-[3px] size-1.5 border-t border-l border-white bg-[#1f7346]" />
                        </span>
                      )}
                    </td>
                  ))}
                </tr>
              ))}
            </tbody>
          </table>
        </div>
        <div className="flex h-3.5 shrink-0 items-center bg-[#fafafa] pr-0.5 pl-0.5">
          <div className="h-[9px] w-[61%] rounded-full bg-[#b9b9b9]" />
          <div className="ml-auto h-3.5 w-px bg-[#c4c4c4]" />
        </div>
      </div>
      <div className="flex w-[15px] shrink-0 justify-center border-l border-[#c9c9c9] bg-[#fafafa] pt-[5px]">
        <div className="h-[46%] w-[9px] rounded-full bg-[#b9b9b9]" />
      </div>
    </div>
  );
}

function SheetTabs() {
  return (
    <div className="flex h-[26px] shrink-0 items-start border-t border-[#c4c4c4] bg-[#eeeeee]">
      <button aria-label="Previous sheet" className="mt-[7px] ml-3.5"><Icon w={9} h={12}><path d="M8 1 V11 L1 6 Z" fill="#b0b0b0" stroke="none" /></Icon></button>
      <button aria-label="Next sheet" className="mt-[7px] ml-3.5"><Icon w={9} h={12}><path d="M1 1 V11 L8 6 Z" fill="#b0b0b0" stroke="none" /></Icon></button>
      <button className="ml-3.5 h-[22px] w-[130px] rounded-b-[3px] border border-t-0 border-[#c8c8c8] border-b-[#9c9c9c] bg-white pt-0.5 text-[12px] font-semibold text-[#2b8455]">StocksTemplate</button>
      <button aria-label="Add sheet" className="mt-[7px] ml-[13px]"><Icon w={11} h={11}><path d="M5.500 .5 V10.500 M.5 5.500 H10.500" stroke="#555" strokeWidth="1.800" /></Icon></button>
      <div className="mt-px ml-[13px] h-5 w-px bg-[#c8c8c8]" />
    </div>
  );
}

function StatusBar() {
  return (
    <footer className="flex h-[23px] shrink-0 items-center border-t border-[#9c9c9c] bg-linear-to-b from-[#e4e4e4] to-[#d8d8d8] text-[12px] text-[#4a4a4a]">
      <span className="ml-6">Ready</span>
      <div className="ml-auto flex h-full items-center">
        <button aria-label="Normal view" className="flex h-full w-[37px] items-center justify-center bg-[#404040]">
          <Icon w={13} h={13}><path d="M.5 .5 H12.500 V12.500 H.5 Z M4.500 .5 V12.500 M8.500 .5 V12.500 M.5 4.500 H12.500 M.5 8.500 H12.500" stroke="#fff" /></Icon>
        </button>
        <button aria-label="Page layout view" className="ml-2.5"><Icon w={14} h={13}><path d="M.5 .5 H13.500 V12.500 H.5 Z M3.500 2.500 H10.500 V10.500 H3.500 Z M5 4.500 H9 M5 6.500 H9 M5 8.500 H9" stroke="#404040" /></Icon></button>
        <button aria-label="Page break view" className="ml-[22px]"><Icon w={14} h={13}><path d="M.5 .5 H13.500 V12.500 H.5 Z M4.500 .5 V7 M.5 7.500 H9.500 V.5" stroke="#404040" /></Icon></button>
        <button aria-label="Zoom out" className="ml-[18px]"><Icon w={10} h={10}><path d="M1 5 H9" stroke="#404040" strokeWidth="2" /></Icon></button>
        <input
          type="range"
          aria-label="Zoom"
          min={0}
          max={100}
          defaultValue={67}
          className="ml-[7px] h-1 w-[98px] appearance-none rounded-full bg-[#404040] [&::-webkit-slider-thumb]:size-[13px] [&::-webkit-slider-thumb]:appearance-none [&::-webkit-slider-thumb]:rounded-full [&::-webkit-slider-thumb]:border [&::-webkit-slider-thumb]:border-[#555] [&::-webkit-slider-thumb]:bg-white"
        />
        <button aria-label="Zoom in" className="ml-[7px]"><Icon w={10} h={10}><path d="M1 5 H9 M5 1 V9" stroke="#404040" strokeWidth="2" /></Icon></button>
        <span className="mr-6 ml-4">200%</span>
      </div>
    </footer>
  );
}

export default function App() {
  return (
    <div className="h-screen bg-[#1c1c1c]">
      <div className="flex h-full flex-col overflow-hidden rounded-md bg-white font-['Inter','Liberation_Sans',sans-serif]">
        <TitleBar />
        <TabRow />
        <Ribbon />
        <FormulaBar />
        <Sheet />
        <SheetTabs />
        <StatusBar />
      </div>
    </div>
  );
}
